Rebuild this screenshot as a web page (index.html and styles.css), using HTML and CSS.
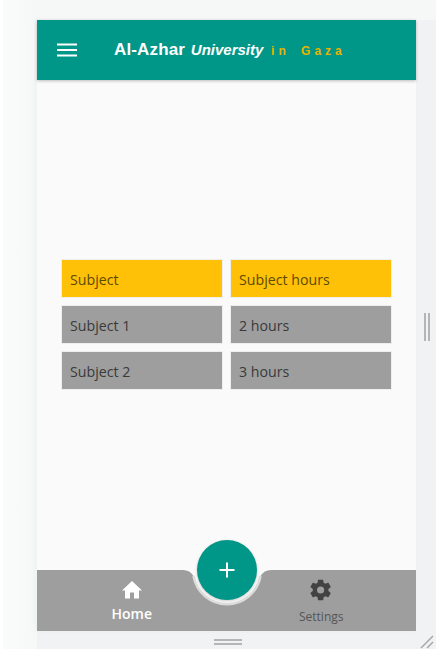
FILE: index.html
```html
<!DOCTYPE html>
<html lang="en">
<head>
<meta charset="utf-8">
<title>Al-Azhar University in Gaza</title>
<link rel="stylesheet" href="styles.css">
</head>
<body>
<div class="device">
  <div class="app">
    <header class="appbar">
      <svg class="menu-icon" width="22" height="16" viewBox="0 0 22 16"><path d="M1 2.500h20M1 8h20M1 13.500h20" stroke="#fff" stroke-width="2"/></svg>
      <h1 class="title"><span class="t-main">Al-Azhar</span> <em class="t-em">University</em> <span class="t-gold">in Gaza</span></h1>
    </header>
    <main class="content">
      <div class="table">
        <div class="cell head">Subject</div><div class="cell head">Subject hours</div>
        <div class="cell">Subject 1</div><div class="cell">2 hours</div>
        <div class="cell">Subject 2</div><div class="cell">3 hours</div>
      </div>
    </main>
    <nav class="tabbar">
      <svg class="tab-bg" width="379" height="61" viewBox="0 0 379 61"><path d="M0 0H146Q153 0 156.500 6A34 34 0 0 0 223.500 6Q227 0 234 0H379V61H0Z" fill="#9e9e9e"/><path d="M157 6A34 34 0 0 0 223 6A34 34 0 0 1 157 6Z" fill="#e4e4e4"/><path d="M156.500 6A34 34 0 0 0 223.500 6" fill="none" stroke="#dcdcdc" stroke-width="2.500"/></svg>
      <a class="tab active">
        <svg width="24" height="24" viewBox="0 0 24 24"><path d="M10 20.500v-6h4v6h5v-8h3L12 3 2 12.500h3v8z" fill="#fff"/></svg>
        <span>Home</span>
      </a>
      <a class="tab">
        <svg width="24" height="24" viewBox="0 0 24 24"><path fill-rule="evenodd" d="M19.400 13c.04-.33.06-.66.06-1s-.02-.67-.07-1l2.200-1.700c.2-.15.250-.43.120-.66l-2.100-3.600c-.13-.23-.4-.3-.63-.23l-2.600 1.040c-.54-.41-1.120-.76-1.760-1.020L14.200 2.100c-.04-.25-.25-.43-.5-.43h-4.200c-.25 0-.46.18-.5.43L8.600 4.830c-.64.26-1.220.61-1.760 1.020L4.240 4.810c-.23-.08-.5 0-.63.23l-2.100 3.600c-.13.230-.08.510.12.660L3.830 11c-.05.33-.08.670-.08 1s.03.670.08 1l-2.200 1.700c-.2.150-.25.430-.12.660l2.100 3.600c.13.230.4.310.63.230l2.600-1.040c.54.410 1.120.760 1.760 1.020l.4 2.730c.04.250.25.430.5.430h4.200c.25 0 .46-.18.5-.43l.4-2.730c.64-.26 1.220-.61 1.760-1.020l2.600 1.040c.23.080.5 0 .63-.23l2.100-3.600c.13-.23.080-.51-.12-.66zM11.600 15.600a3.600 3.600 0 1 1 0-7.200 3.600 3.600 0 0 1 0 7.200z" fill="#424242"/></svg>
        <span>Settings</span>
      </a>
      <button class="fab" type="button" aria-label="Add"><svg width="20" height="20" viewBox="0 0 20 20"><path d="M10 2.500v15M2.500 10h15" stroke="#fff" stroke-width="2"/></svg></button>
    </nav>
  </div>
  <div class="grip grip-right"></div>
  <div class="grip grip-bottom"></div>
  <svg class="grip-corner" width="14" height="14" viewBox="0 0 14 14"><path d="M1 13L13 1M7 13L13 7" stroke="#a8a8a8" stroke-width="1.500"/></svg>
</div>
</body>
</html>
```
FILE: styles.css
```css
* { box-sizing: border-box; }
html, body { margin: 0; padding: 0; background: #fff; }
body { width: 446px; height: 659px; overflow: hidden; font-family: "Open Sans", "Noto Sans", sans-serif; }
.device {
  position: relative;
  width: 433px;
  height: 649px;
  margin-left: 3px;
  padding: 20px 20px 18px 34px;
  background:
    linear-gradient(#f1f2f4, #f1f2f4) 34px 20px / 399px 100% no-repeat,
    linear-gradient(to right, #fafbfb 0, #f6f7f7 34px, #f6f7f7 100%);
}
.app {
  display: flex;
  flex-direction: column;
  width: 379px;
  height: 611px;
  background: #fafafa;
  box-shadow: -2px 0 6px rgba(0,0,0,.03);
}
.appbar {
  display: flex;
  align-items: center;
  gap: 36px;
  flex: 0 0 60px;
  padding: 0 19px;
  background: #009688;
  box-shadow: 0 1px 3px rgba(0,0,0,.25);
  position: relative;
}
.menu-icon { flex: none; }
.title { margin: 0; font: bold 17px "Liberation Sans", Arial, sans-serif; color: #fff; white-space: pre; }
.t-main { letter-spacing: .15px; }
.t-em { font-size: 15px; font-style: italic; margin-left: 1px; }
.t-gold { margin-left: 3px; font-size: 12px; color: #e6b400; letter-spacing: 4px; word-spacing: 4px; }
.content { flex: 1; display: flex; align-items: center; justify-content: center; padding-bottom: 1px; }
.table { display: grid; grid-template-columns: 160px 160px; grid-auto-rows: 37px; gap: 9px; }
.cell {
  display: flex;
  align-items: center;
  padding: 2px 8px 0;
  background: #9e9e9e;
  color: #3a3a3a;
  font-size: 14.200px;
  box-shadow: 0 0 0 1px #eee;
}
.cell.head { background: #ffc107; color: #5c4a00; }
.tabbar { position: relative; flex: 0 0 61px; display: flex; }
.tab-bg { position: absolute; left: 0; top: 0; }
.tab { position: relative; flex: 1; display: flex; flex-direction: column; align-items: center; padding-top: 8px; color: #555; font-size: 12px; line-height: 16px; }
.tab svg { display: block; }
.tab span { margin-top: 7px; }
.tab.active { color: #fff; font-size: 14px; font-weight: 600; }
.tab.active span { margin-top: 4px; }
.fab {
  position: absolute;
  left: 160px;
  top: -30px;
  width: 60px;
  height: 60px;
  padding: 0;
  border: 0;
  border-radius: 50%;
  background: #009688;
  display: flex;
  align-items: center;
  justify-content: center;
  box-shadow: 0 1px 3px rgba(0,0,0,.2);
}
.grip { position: absolute; }
.grip-right { left: 421px; top: 313px; width: 6px; height: 28px; border-left: 2px solid #b5b5b5; border-right: 2px solid #b5b5b5; }
.grip-bottom { left: 211px; top: 639px; width: 28px; height: 6px; border-top: 2px solid #b5b5b5; border-bottom: 2px solid #b5b5b5; }
.grip-corner { position: absolute; left: 417px; top: 635px; }
```
